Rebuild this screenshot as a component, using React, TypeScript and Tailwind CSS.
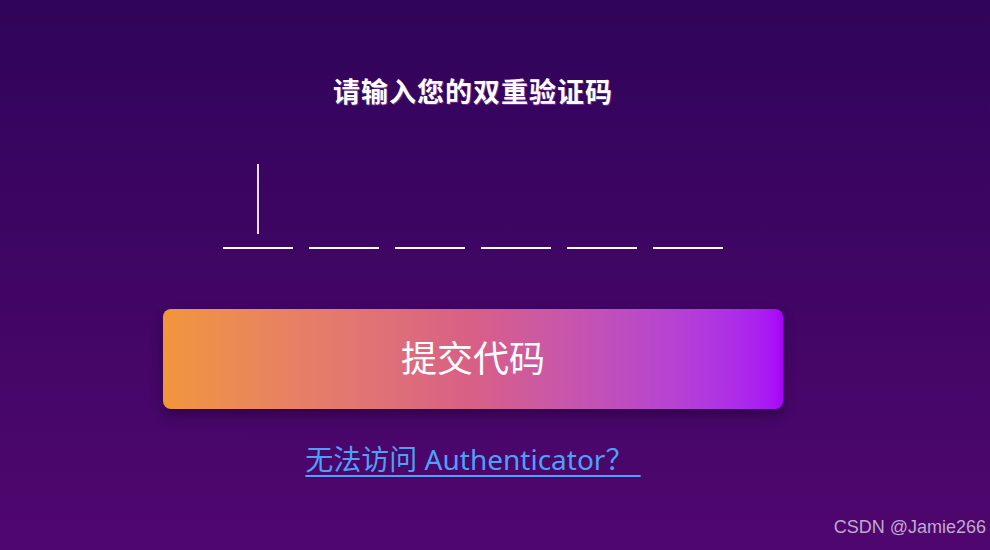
export default function App() {
  const boxes = [0, 1, 2, 3, 4, 5];

  return (
    <div
      className="relative h-[550px] w-[990px] overflow-hidden bg-gradient-to-b from-[#30045a] to-[#50066f]"
      style={{ fontFamily: '"Noto Sans", "Noto Sans CJK SC", sans-serif' }}
    >
      <div className="flex w-[946px] flex-col items-center pt-[73px]">
        {/* Title */}
        <h1 className="text-[27px] font-bold leading-[38px] tracking-[1px] text-white [text-shadow:1px_1px_0_rgba(170,100,200,0.45)]">
          请输入您的双重验证码
        </h1>

        {/* Code inputs */}
        <div className="mt-[51px] flex gap-4">
          {boxes.map((i) => (
            <div
              key={i}
              className="relative flex h-[87px] w-[70px] items-center justify-center border-b-2 border-white"
            >
              {i === 0 && <span className="mt-[-11px] h-[70px] w-[2px] bg-[#e8e0f0]" />}
            </div>
          ))}
        </div>

        {/* Submit */}
        <button className="mt-[60px] flex h-[100px] w-[620px] items-center justify-center rounded-lg bg-gradient-to-r from-[#f2963a] via-[#d85f86] to-[#a703f8] text-[36px] text-white shadow-[0_6px_12px_rgba(20,0,40,0.45)]">
          提交代码
        </button>

        {/* Link */}
        <a className="mt-[31px] text-[28px] leading-[38px] text-[#4ea0f6] underline decoration-[2px] underline-offset-[5px]">
          无法访问 Authenticator？&nbsp;
        </a>
      </div>

      {/* Watermark */}
      <div
        className="absolute bottom-[9px] right-[4px] text-[18px] text-[#c0a8d0]"
        style={{ fontFamily: '"Liberation Sans", Arial, sans-serif' }}
      >
        CSDN @Jamie266
      </div>
    </div>
  );
}
